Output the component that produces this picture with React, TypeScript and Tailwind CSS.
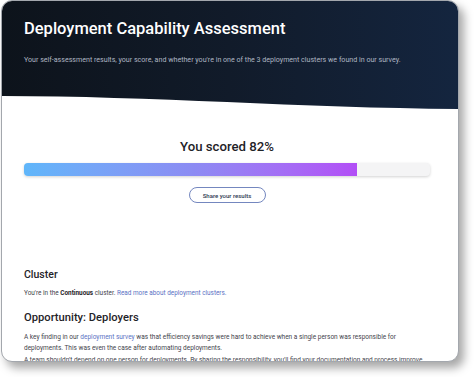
export default function App() {
  return (
    <div className="h-[377px] w-[474px] overflow-hidden bg-white font-['Roboto',sans-serif]">
      <div className="ml-px flex h-[362px] w-[458px] flex-col overflow-hidden rounded-[11px] border border-[#a3a7ad] bg-white shadow-[5px_6px_10px_rgba(0,0,0,0.35)]">
        {/* header with wavy bottom edge */}
        <div className="flex h-[108px] shrink-0 flex-col bg-gradient-to-r from-[#0d131b] via-[#111b2a] to-[#14253f]">
          <div className="pl-[22px] pr-[28px] pt-[15px]">
            <h1 className="text-[16.5px] font-medium leading-[26px] text-white">Deployment Capability Assessment</h1>
            <p className="mt-[13px] text-[7.1px] leading-[10px] text-[#aeb6c2]">
              Your self-assessment results, your score, and whether you're in one of the 3 deployment clusters we found in our survey.
            </p>
          </div>
          <svg className="mt-auto block" width="458" height="13" viewBox="0 0 458 13" preserveAspectRatio="none">
            <path d="M0 0 C150 0 300 12 458 13 L458 14 L0 14 Z" fill="#ffffff" />
          </svg>
        </div>

        <div className="pl-[22px] pr-[28px]">
          <h2 className="mt-[29px] text-center text-[13.2px] font-medium leading-[18px] text-[#1f2328]">You scored 82%</h2>
          <div className="mt-[7px] h-[13px] w-full overflow-hidden rounded-[4px] bg-[#f4f4f5] shadow-[0_1px_3px_rgba(0,0,0,0.18)]">
            <div className="h-full bg-gradient-to-r from-[#5fb6fa] via-[#8b8cf3] to-[#b24ef6]" style={{ width: '82%' }} />
          </div>
          <div className="mt-[11px] flex justify-center">
            <button className="h-[16px] w-[77px] rounded-full border border-[#7487bf] text-[6px] font-medium text-[#2b3852]">
              Share your results
            </button>
          </div>

          <h3 className="mt-[65px] text-[10.5px] font-medium leading-[14px] text-[#1f2328]">Cluster</h3>
          <p className="mt-[6px] text-[6.4px] leading-[10px] text-[#3f444c]">
            You're in the <b className="font-bold text-[#1f2328]">Continuous</b> cluster.{' '}
            <a className="text-[#5b72c4]">Read more about deployment clusters.</a>
          </p>
          <h3 className="mt-[12px] text-[11.2px] font-medium leading-[16px] text-[#1f2328]">Opportunity: Deployers</h3>
          <p className="mt-[6px] text-[6.5px] leading-[11px] text-[#3f444c]">
            A key finding in our <a className="text-[#5b72c4]">deployment survey</a> was that efficiency savings were hard to achieve when a single person was responsible for deployments. This was even the case after automating deployments.
          </p>
          <p className="mt-[1px] text-[6.5px] leading-[11px] text-[#3f444c]">
            A team shouldn't depend on one person for deployments. By sharing the responsibility, you'll find your documentation and process improve.
          </p>
        </div>
      </div>
    </div>
  );
}
